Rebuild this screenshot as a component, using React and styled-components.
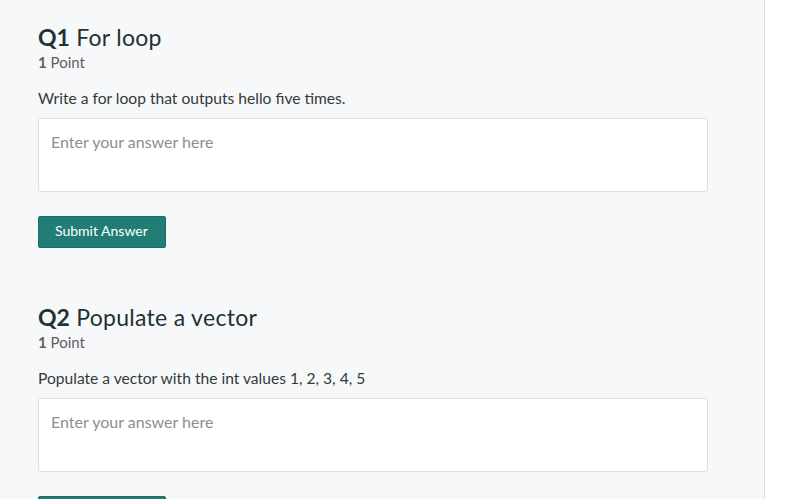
import styled, { createGlobalStyle } from 'styled-components'

const GlobalStyle = createGlobalStyle`
  html, body {
    margin: 0;
    padding: 0;
    background: #ffffff;
    font-family: Lato, "Open Sans", sans-serif;
  }
`;

const Page = styled.div`
  display: flex;
  height: 499px;
  overflow: hidden;
`;

const Panel = styled.main`
  width: 765px;
  background: #f7f8fa;
  border-right: 1px solid #dcdde0;
  padding: 23px 56px 0 38px;
  box-sizing: border-box;
  display: flex;
  flex-direction: column;
  gap: 55px;
`;

const Question = styled.section`
  display: flex;
  flex-direction: column;
  align-items: flex-start;
`;

const Title = styled.h2`
  margin: 0 0 1px;
  font-size: 23px;
  line-height: 28px;
  font-weight: 400;
  color: #233232;
  letter-spacing: 0.3px;

  b {
    font-weight: 700;
    letter-spacing: 0;
  }
`;

const Points = styled.div`
  font-size: 15px;
  line-height: 20px;
  color: #5b6161;

  b {
    font-weight: 700;
  }
`;

const Prompt = styled.p`
  margin: 16px 0 0;
  font-size: 15.6px;
  line-height: 20px;
  color: #333a3a;
`;

const Answer = styled.textarea`
  margin-top: 10px;
  width: 100%;
  height: 74px;
  box-sizing: border-box;
  padding: 13px 12px;
  border: 1px solid #dddfe2;
  border-radius: 3px;
  background: #fff;
  font-family: inherit;
  font-size: 16px;
  line-height: 20px;
  color: #333;
  resize: none;
  outline: none;

  &::placeholder {
    color: #8a8f8f;
  }
`;

const SubmitButton = styled.button`
  margin-top: 24px;
  height: 32px;
  padding: 0 17px 3px 16px;
  background: #217d76;
  color: #fff;
  border: 1px solid #1b6e68;
  border-radius: 2px;
  font-family: inherit;
  font-size: 14px;
  cursor: pointer;
`;

const questions = [
  { id: 'Q1', title: 'For loop', prompt: 'Write a for loop that outputs hello five times.' },
  { id: 'Q2', title: 'Populate a vector', prompt: 'Populate a vector with the int values 1, 2, 3, 4, 5' },
];

const App = () => {
  return (
    <>
      <GlobalStyle />
      <Page>
        <Panel>
          {questions.map(q => (
            <Question key={q.id}>
              <Title><b>{q.id}</b> {q.title}</Title>
              <Points><b>1</b> Point</Points>
              <Prompt>{q.prompt}</Prompt>
              <Answer placeholder='Enter your answer here' />
              <SubmitButton>Submit Answer</SubmitButton>
            </Question>
          ))}
        </Panel>
      </Page>
    </>
  );
}

export default App
